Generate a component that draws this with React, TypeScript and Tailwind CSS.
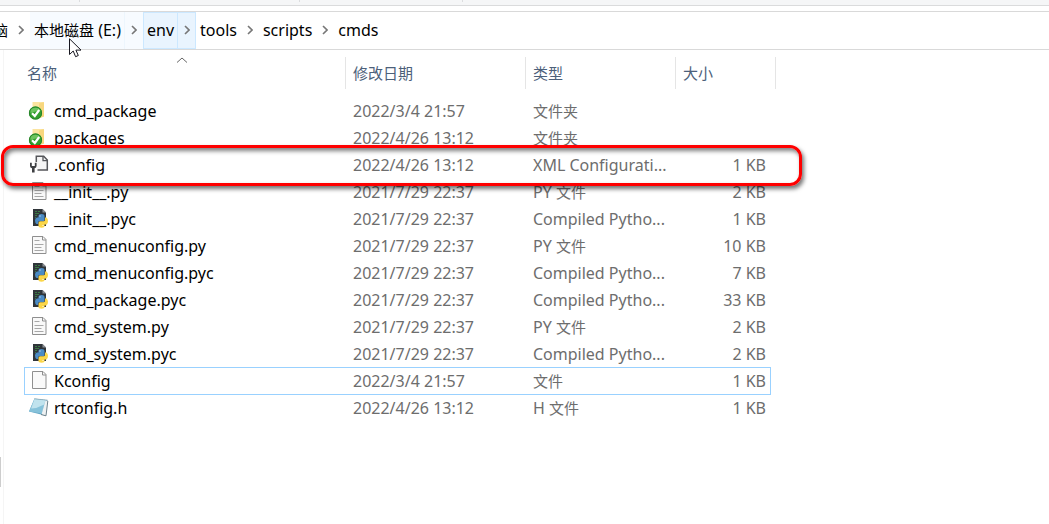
import type { ReactNode } from "react";

type Kind = "folder" | "config" | "text" | "pyc" | "blank" | "header";

interface Entry {
  name: string;
  kind: Kind;
  date: string;
  type: ReactNode;
  size?: string;
}

function Zh({ children }: { children: ReactNode }) {
  return <span className="text-[15px]">{children}</span>;
}

const folderType = <Zh>文件夹</Zh>;
const pyType = <>PY <Zh>文件</Zh></>;

const entries: Entry[] = [
  { name: "cmd_package", kind: "folder", date: "2022/3/4 21:57", type: folderType },
  { name: "packages", kind: "folder", date: "2022/4/26 13:12", type: folderType },
  { name: ".config", kind: "config", date: "2022/4/26 13:12", type: "XML Configurati...", size: "1 KB" },
  { name: "__init__.py", kind: "text", date: "2021/7/29 22:37", type: pyType, size: "2 KB" },
  { name: "__init__.pyc", kind: "pyc", date: "2021/7/29 22:37", type: "Compiled Pytho...", size: "1 KB" },
  { name: "cmd_menuconfig.py", kind: "text", date: "2021/7/29 22:37", type: pyType, size: "10 KB" },
  { name: "cmd_menuconfig.pyc", kind: "pyc", date: "2021/7/29 22:37", type: "Compiled Pytho...", size: "7 KB" },
  { name: "cmd_package.pyc", kind: "pyc", date: "2021/7/29 22:37", type: "Compiled Pytho...", size: "33 KB" },
  { name: "cmd_system.py", kind: "text", date: "2021/7/29 22:37", type: pyType, size: "2 KB" },
  { name: "cmd_system.pyc", kind: "pyc", date: "2021/7/29 22:37", type: "Compiled Pytho...", size: "2 KB" },
  { name: "Kconfig", kind: "blank", date: "2022/3/4 21:57", type: <Zh>文件</Zh>, size: "1 KB" },
  { name: "rtconfig.h", kind: "header", date: "2022/4/26 13:12", type: <>H <Zh>文件</Zh></>, size: "1 KB" },
];

function FileIcon({ kind }: { kind: Kind }) {
  return (
    <svg viewBox="0 0 22 20" className="mt-[3px] h-5 w-[22px] shrink-0" aria-hidden="true">
      {kind === "folder" && (
        <>
          <path d="M4.500 1h11v15h-11z" fill="#fbe4a0" />
          <path d="M11 2.500l5-1.500v14.500l-5 2z" fill="#f8d77e" />
          <circle cx="7.500" cy="12" r="6.600" fill="#349f2f" />
          <circle cx="7.500" cy="12" r="6.100" fill="none" stroke="#27842a" strokeWidth="1" />
          <path d="M2.500 10a5.200 4.500 0 0 1 10 0q-5 0-10 2z" fill="#6cc45f" />
          <path d="M4 12.200l2.800 2.800 4.400-6" fill="none" stroke="#fff" strokeWidth="2.200" />
        </>
      )}
      {kind === "config" && (
        <>
          <path d="M8.300 7V1.300h7.400l3.600 3.700v10H9.500" fill="#f5f5f5" stroke="#55565a" strokeWidth="1.500" />
          <path d="M15 1v4.700h4.500" fill="none" stroke="#55565a" strokeWidth="1.300" />
          <path d="M2 7.800v3.200q0 1.700 2 2.300v4.200h2.600v-4.200q2-.6 2-2.300V7.800H6.800V11h-3V7.800z" fill="#3e3f42" />
        </>
      )}
      {(kind === "text" || kind === "blank") && (
        <>
          <path d="M4.500.5h10.500l3 3v14H4.500z" fill="#f9f9f9" stroke="#8f8f8f" />
          <path d="M14.500.5V4H18" fill="none" stroke="#8f8f8f" />
        </>
      )}
      {kind === "text" && (
        <path d="M6.500 4.500h5M6.500 8.500h9M6.500 11.500h7M6.500 14.500h9" stroke="#a8a8a8" />
      )}
      {kind === "pyc" && (
        <>
          <path d="M5 0h9.500L18 3.500V17H5z" fill="#30353a" />
          <path d="M14.500 0v3.500H18z" fill="#8a8f94" />
          <path d="M7 2.500h2M10 2.500h2M7 4.500h4M7 6.500h2M7 8.500h1" stroke="#3b7a45" />
          <path d="M10.500 8.500V7q0-2 3-2t3 2v4q0 1-1 1h-4Q10 12 10 15H8.500Q7 14 7 11.500t2-3z" fill="#4b8bc4" />
          <path d="M17 8.500h1.500q1.500 1 1.500 3.500t-1.500 3.500h-2V17q0 1.700-3 1.700t-3-1.700v-3.200q0-1.500 1.500-1.500h3.500q1.500 0 1.500-1.500z" fill="#fbd648" />
          <path d="M11.500 7h1" stroke="#fff" />
          <path d="M14.500 16.500h1" stroke="#fff" />
        </>
      )}
      {kind === "header" && (
        <>
          <path d="M6.500.5L19.500 2l-2.500 15.500L1 13.500z" fill="#62a5c4" />
          <path d="M6.500 1l11 1.200L14 15.500 1 13.500z" fill="#86c2da" />
          <path d="M6.500 1l11 1.200-1.300 4.300-8 3.500-5 .5z" fill="#c0e3ee" />
          <path d="M17.500 2.200l2.300.8-1.800 14.800-4.500-1.300z" fill="#eef1f2" />
          <path d="M19.800 3L18 17.800l-5-1.300" fill="none" stroke="#5f7580" strokeWidth=".9" />
          <path d="M6.500.8l13 1.400" stroke="#899ba3" strokeDasharray="1 1" />
        </>
      )}
    </svg>
  );
}

function Chevron() {
  return (
    <svg viewBox="0 0 6 10" className="h-2.5 w-1.5" aria-hidden="true">
      <path d="M1 1l4 4-4 4" fill="none" stroke="#777" strokeWidth="1.600" />
    </svg>
  );
}

function Crumb({ label }: { label: string }) {
  return (
    <li className="flex items-center pb-0.5">
      <a href="#" className="px-1">{label}</a>
    </li>
  );
}

function Separator() {
  return (
    <li className="flex w-[18px] items-center justify-center pb-0.5" aria-hidden="true">
      <Chevron />
    </li>
  );
}

function AddressBar() {
  return (
    <nav aria-label="Path" className="relative mt-[5px] h-[39px] border-y border-[#d9d9d9] bg-white text-black">
      <ol className="flex h-full items-stretch whitespace-nowrap">
        <li className="flex w-[30px] items-center justify-between pb-0.5 pr-1.5">
          <a href="#" className="flex w-2 justify-end overflow-hidden"><Zh>脑</Zh></a>
          <Chevron />
        </li>
        <li className="flex w-[113px] bg-[#f7fbff]">
          <a href="#" className="flex w-[95px] items-center border-r border-[#edf6fd] pb-0.5 pl-1">
            <span><Zh>本地磁盘</Zh> (E:)</span>
          </a>
          <span className="flex flex-1 items-center justify-center pb-0.5"><Chevron /></span>
        </li>
        <li className="flex w-[53px] border border-[#cce8ff] bg-[#e9f4fe]">
          <a href="#" className="flex w-[34px] items-center justify-center border-r border-[#cce8ff] pb-0.5">env</a>
          <span className="flex flex-1 items-center justify-center pb-0.5"><Chevron /></span>
        </li>
        <Crumb label="tools" />
        <Separator />
        <Crumb label="scripts" />
        <Separator />
        <Crumb label="cmds" />
      </ol>
      <svg viewBox="0 0 14 20" className="absolute left-[68px] top-[26px] z-10 h-5 w-3.5" aria-hidden="true">
        <path d="M1.500.8v15.700l3.700-3.500 2.400 5.700 2.700-1.200-2.400-5.400h5.100z" fill="#fff" stroke="#16161f" strokeWidth="1" />
      </svg>
    </nav>
  );
}

const headCell = "border-r border-[#e5e5e5] p-0 text-left font-normal text-[#4c607a]";

export default function App() {
  return (
    <div className="flex min-h-screen flex-col overflow-hidden bg-white font-['Noto_Sans','Noto_Sans_CJK_SC',sans-serif] text-[16px] leading-[26px]">
      <div className="flex h-1.5 items-start border-b border-[#dadbdc] bg-[#f5f6f7]">
        <span className="h-0.5 w-20 border-r border-[#dcdddf]" />
        <span className="h-0.5 w-[220px] border-r border-[#dcdddf]" />
        <span className="h-0.5 w-[163px] border-r border-[#dcdddf]" />
      </div>
      <AddressBar />
      <main className="flex grow">
        <div className="flex w-1 flex-col border-r border-[#f5f5f5] pt-[407px]">
          <span className="h-[30px] w-px bg-[#cdcdcd]" />
        </div>
        <div className="pl-5 pt-[7px]">
          <table className="w-[752px] table-fixed border-separate border-spacing-0">
            <colgroup>
              <col className="w-[322px]" />
              <col className="w-[180px]" />
              <col className="w-[150px]" />
              <col className="w-[100px]" />
            </colgroup>
            <thead>
              <tr className="h-8">
                <th className={`${headCell} relative pl-[3px]`}>
                  <Zh>名称</Zh>
                  <svg viewBox="0 0 12 6" className="absolute left-[152px] top-0 h-1.5 w-3" aria-hidden="true">
                    <path d="M1 5.500l5-4.500 5 4.500" fill="none" stroke="#666" />
                  </svg>
                </th>
                <th className={`${headCell} pl-[7px]`}><Zh>修改日期</Zh></th>
                <th className={`${headCell} pl-[7px]`}><Zh>类型</Zh></th>
                <th className={`${headCell} pl-[7px]`}><Zh>大小</Zh></th>
              </tr>
            </thead>
            <tbody className="text-[#6d6d6d] before:block before:h-[9px] before:content-['']">
              {entries.map((entry) => (
                <tr key={entry.name} className="relative h-[27px] whitespace-nowrap align-top">
                  <td className="p-0 text-black">
                    <div className="flex items-start gap-1 pl-1">
                      <FileIcon kind={entry.kind} />
                      {entry.name}
                    </div>
                    {entry.kind === "blank" && (
                      <span className="pointer-events-none absolute -top-px bottom-0 left-0 right-[5px] border border-[#99d1ff]" />
                    )}
                    {entry.kind === "config" && (
                      <span className="pointer-events-none absolute -bottom-[7px] -left-[23px] -right-[26px] -top-[7px] z-10 rounded-xl border-3 border-[#fe0000] shadow-[2px_3px_4px_rgba(0,0,0,0.55),inset_2px_3px_4px_rgba(0,0,0,0.5)]" />
                    )}
                  </td>
                  <td className="py-0 pl-[7px] pr-0">{entry.date}</td>
                  <td className="py-0 pl-[7px] pr-0">{entry.type}</td>
                  <td className="py-0 pl-0 pr-[10px] text-right">{entry.size}</td>
                </tr>
              ))}
            </tbody>
          </table>
        </div>
      </main>
    </div>
  );
}
